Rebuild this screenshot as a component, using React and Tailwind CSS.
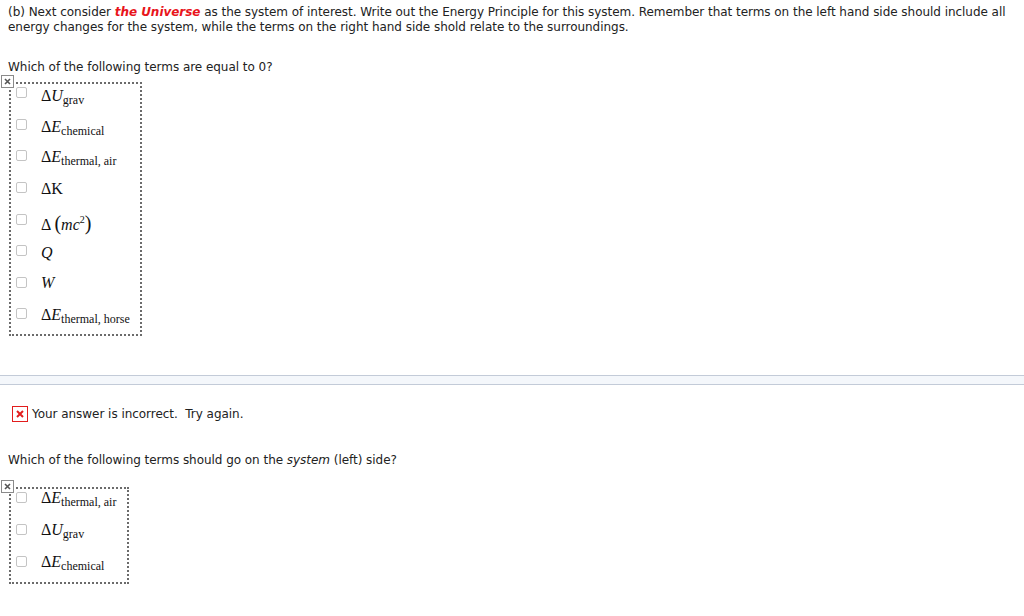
import React from "react";

const BrokenImg = () => (
  <div className="absolute left-[1px] top-0 flex h-[13px] w-[13px] items-center justify-center border border-[#8a8a8a] bg-white">
    <svg width="7" height="7" viewBox="0 0 7 7">
      <path d="M1 1 L6 6 M6 1 L1 6" stroke="#555" strokeWidth="1.6" />
    </svg>
  </div>
);

const Check = () => (
  <span className="mt-[3px] block h-[11px] w-[11px] shrink-0 rounded-[2px] border border-[#c4c4c4] bg-white" />
);

const Sub = ({ children }) => (
  <span className="align-[-3px] text-[12px]">{children}</span>
);

// row height + label top padding, as full class names
const firstTerms = [
  {
    cls: "h-[32px]",
    pad: "pt-[4px]",
    label: (
      <>
        Δ<i>U</i>
        <Sub>grav</Sub>
      </>
    ),
  },
  {
    cls: "h-[31px]",
    pad: "pt-[3px]",
    label: (
      <>
        Δ<i>E</i>
        <Sub>chemical</Sub>
      </>
    ),
  },
  {
    cls: "h-[32px]",
    pad: "pt-[2px]",
    label: (
      <>
        Δ<i>E</i>
        <Sub>thermal, air</Sub>
      </>
    ),
  },
  { cls: "h-[32px]", pad: "pt-[2px]", label: <>ΔK</> },
  {
    cls: "h-[31px]",
    pad: "pt-[1px]",
    label: (
      <>
        Δ{" "}
        <span className="text-[20px] leading-none">(</span>
        <i>mc</i>
        <span className="align-[7px] text-[10px]">2</span>
        <span className="text-[20px] leading-none">)</span>
      </>
    ),
  },
  { cls: "h-[32px]", pad: "pt-[3px]", label: <i>Q</i> },
  { cls: "h-[31px]", pad: "pt-[1px]", label: <i>W</i> },
  {
    cls: "h-[29px]",
    pad: "pt-[2px]",
    label: (
      <>
        Δ<i>E</i>
        <Sub>thermal, horse</Sub>
      </>
    ),
  },
];

const secondTerms = [
  {
    cls: "h-[32px]",
    pad: "pt-[1px]",
    label: (
      <>
        Δ<i>E</i>
        <Sub>thermal, air</Sub>
      </>
    ),
  },
  {
    cls: "h-[32px]",
    pad: "pt-[1px]",
    label: (
      <>
        Δ<i>U</i>
        <Sub>grav</Sub>
      </>
    ),
  },
  {
    cls: "h-[29px]",
    pad: "pt-[1px]",
    label: (
      <>
        Δ<i>E</i>
        <Sub>chemical</Sub>
      </>
    ),
  },
];

const TermBox = ({ terms, width }) => (
  <div className="relative pl-[9px] pt-[7px]">
    <BrokenImg />
    <div className={"border-2 border-dotted border-[#6b6b6b] pl-[5px] " + width}>
      {terms.map((t, i) => (
        <div key={i} className={"flex items-start gap-[14px] " + t.cls}>
          <Check />
          <div
            className={
              "whitespace-nowrap font-['Liberation_Serif',serif] text-[16px] leading-[16px] tracking-normal text-[#111] " +
              t.pad
            }
          >
            {t.label}
          </div>
        </div>
      ))}
    </div>
  </div>
);

export default function App() {
  return (
    <div className="flex h-[616px] w-[1024px] flex-col overflow-hidden bg-white font-['DejaVu_Sans',sans-serif] text-[12px] leading-[15px] tracking-[-0.04px] text-[#222]">
      <p className="px-[8px] pt-[5px]">
        (b) Next consider{" "}
        <b className="italic text-[#e8141b]">the Universe</b> as the system of
        interest. Write out the Energy Principle for this system. Remember that
        terms on the left hand side should include all
        <br />
        energy changes for the system, while the terms on the right hand side
        shold relate to the surroundings.
      </p>

      <p className="mt-[25px] px-[8px]">Which of the following terms are equal to 0?</p>

      <TermBox terms={firstTerms} width="w-[133px]" />

      <div className="mt-[39px] h-[10px] border-y border-[#c3cbd8] bg-[#f4f7fb]" />

      <div className="mt-[21px] flex items-center gap-[4px] pl-[12px]">
        <span className="flex h-[16px] w-[16px] items-center justify-center border border-[#e21d1d]">
          <svg width="8" height="8" viewBox="0 0 8 8">
            <path d="M1 1 L7 7 M7 1 L1 7" stroke="#e21d1d" strokeWidth="2" />
          </svg>
        </span>
        <span>Your answer is incorrect.&nbsp; Try again.</span>
      </div>

      <p className="mt-[31px] px-[8px]">
        Which of the following terms should go on the <i>system</i> (left) side?
      </p>

      <div className="mt-[12px]">
        <TermBox terms={secondTerms} width="w-[120px]" />
      </div>
    </div>
  );
}
